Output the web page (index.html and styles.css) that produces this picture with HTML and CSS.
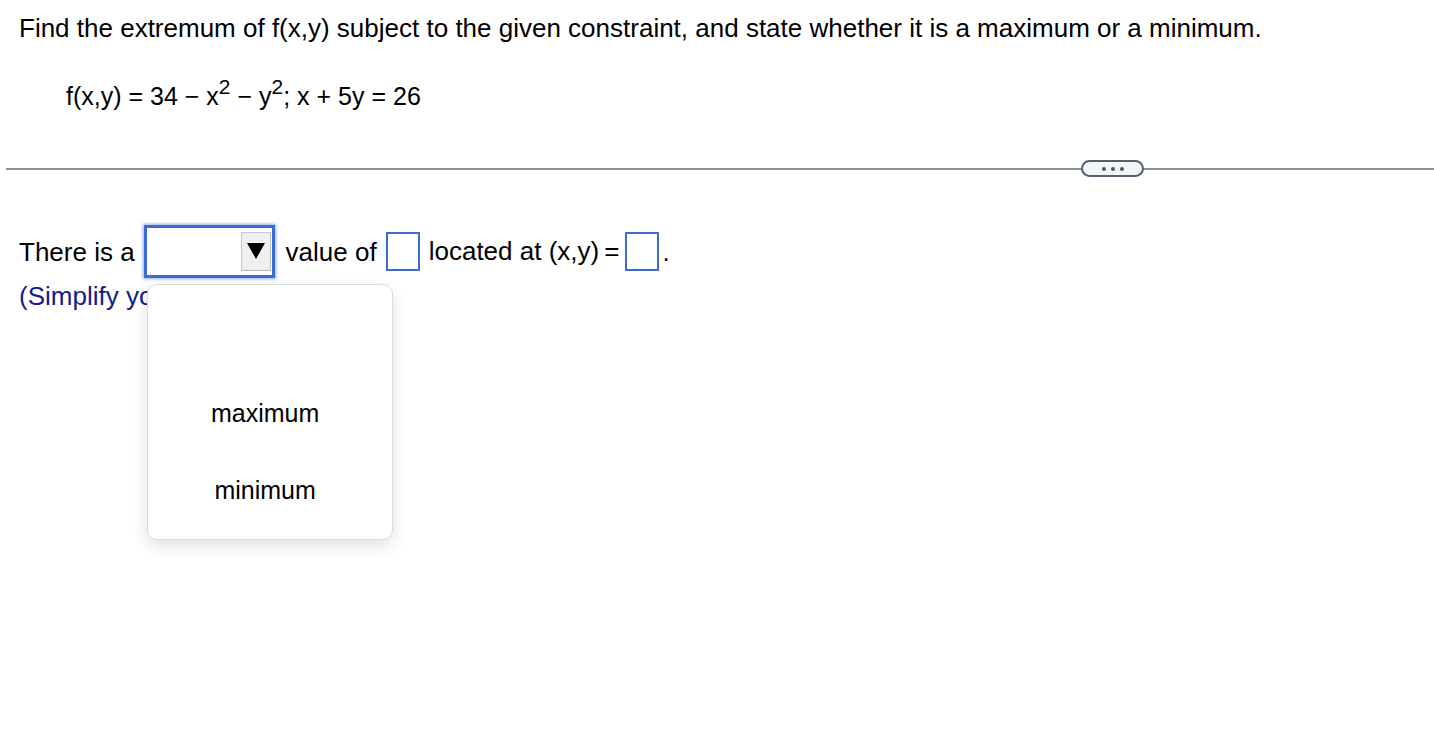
FILE: index.html
```html
<!DOCTYPE html>
<html>
<head>
<meta charset="utf-8">
<link rel="stylesheet" href="styles.css">
</head>
<body>
<div class="question">
  <p class="prompt">Find the extremum of f(x,y) subject to the given constraint, and state whether it is a maximum or a minimum.</p>
  <p class="equation">f(x,y) = 34 − x<sup>2</sup> − y<sup>2</sup>; x + 5y = 26</p>
</div>
<div class="divider">
  <span class="more"><i></i><i></i><i></i></span>
</div>
<div class="answer">
  <div class="line">
    <span class="txt">There is a</span>
    <span class="select-wrap">
      <span class="select"><span class="arrow"><svg width="20" height="18" viewBox="0 0 20 18"><polygon points="1,1 19,1 10,17" fill="#000"/></svg></span></span>
      <div class="menu">
        <div class="opt">maximum</div>
        <div class="opt">minimum</div>
      </div>
    </span>
    <span class="txt">value of</span>
    <span class="box"></span>
    <span class="txt">located at (x,y)<span class="tight"> </span>=</span>
    <span class="box last"></span>
    <span class="txt dot">.</span>
  </div>
  <p class="hint">(Simplify your answers.)</p>
</div>
</body>
</html>
```
FILE: styles.css
```css
html, body {
  margin: 0;
  padding: 0;
  background: #fff;
}
body {
  font-family: "Liberation Sans", Arial, sans-serif;
  color: #000;
  font-size: 26px;
  width: 1434px;
  height: 738px;
  overflow: hidden;
}
.question {
  padding: 0 19px;
}
.prompt {
  margin: 0;
  padding-top: 13px;
  line-height: 30px;
}
.equation {
  margin: 0;
  padding-top: 38px;
  padding-left: 47px;
  line-height: 30px;
  font-size: 25px;
}
.equation sup {
  font-size: 21px;
  line-height: 0;
  position: relative;
  top: -2px;
  vertical-align: super;
}
.divider {
  margin: 57px 0 0 6px;
  height: 2px;
  background: #8a8f9b;
  position: relative;
}
.more {
  position: absolute;
  left: 1075px;
  top: -8px;
  width: 59px;
  height: 13px;
  border: 2px solid #555f6d;
  border-radius: 9px;
  background: #f3f5f8;
  display: flex;
  align-items: center;
  justify-content: center;
  gap: 5px;
}
.more i {
  width: 4px;
  height: 4px;
  border-radius: 50%;
  background: #4f5866;
}
.answer {
  padding: 54px 19px 0;
}
.line {
  display: flex;
  align-items: center;
  height: 54px;
}
.txt {
  line-height: 30px;
  padding-top: 2px;
  white-space: pre;
}
.tight {
  font-size: 18px;
}
.select-wrap {
  position: relative;
  margin-left: 9px;
  margin-right: 11px;
}
.select {
  display: flex;
  justify-content: flex-end;
  align-items: center;
  width: 125px;
  height: 47px;
  border: 3px solid #3b6cd0;
  box-shadow: 0 0 3px 1px rgba(59,108,208,0.55);
  background: #fff;
  box-sizing: content-box;
}
.arrow {
  display: flex;
  align-items: center;
  justify-content: center;
  width: 28px;
  height: 37px;
  margin-right: 1px;
  background: #efefef;
  border: 1px solid #c8c8c8;
  border-right-color: #bdbdbd;
  border-bottom-color: #b5b5b5;
}
.menu {
  position: absolute;
  left: 3px;
  top: 59px;
  width: 246px;
  height: 256px;
  background: #fff;
  border: 1px solid #dcdcdc;
  border-radius: 10px;
  box-shadow: 0 6px 16px rgba(0,0,0,0.12);
  z-index: 5;
  box-sizing: border-box;
  padding-top: 113px;
  padding-right: 9px;
}
.opt {
  text-align: center;
  font-size: 25px;
  line-height: 30px;
  height: 77px;
}
.box {
  width: 30px;
  height: 35px;
  border: 2px solid #3b6bcb;
  margin: 0 9px;
}
.box.last {
  margin-left: 6px;
  margin-right: 7px;
}
.dot {
  margin-left: -4px;
}
.hint {
  margin: 0;
  color: #10208a;
  line-height: 30px;
  margin-top: 3px;
}
```
